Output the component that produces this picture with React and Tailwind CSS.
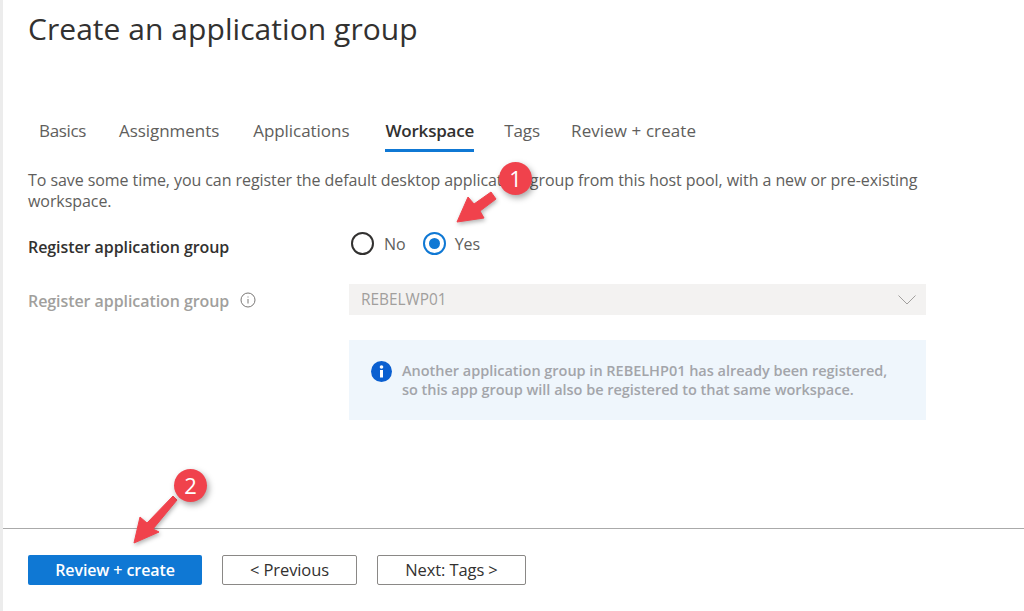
const TABS = [
  { label: "Basics", className: "tracking-[-0.35px]" },
  { label: "Assignments", className: "" },
  { label: "Applications", className: "ml-[1px]" },
  { label: "Workspace", className: "ml-[3px] border-b-[3px] border-[#0f78d4] font-semibold tracking-[-0.2px] text-[#323130]" },
  { label: "Tags", className: "-ml-[3px]" },
  { label: "Review + create", className: "-ml-[2px] tracking-[0.08px]" },
];

function Badge({ n, className }) {
  return (
    <div className={`absolute w-[33px] h-[33px] rounded-full bg-[#f0424c] text-white flex items-center justify-center text-[22px] shadow-[2px_3px_6px_rgba(0,0,0,0.35)] ${className}`}>
      {n}
    </div>
  );
}

function Arrow({ className, width, height, points }) {
  return (
    <svg className={`absolute drop-shadow-[1px_2px_2px_rgba(0,0,0,0.3)] ${className}`} width={width} height={height} viewBox={`0 0 ${width} ${height}`}>
      <polygon points={points} fill="#f0424c" stroke="#f0424c" strokeWidth="1" strokeLinejoin="round" />
    </svg>
  );
}

export default function App() {
  return (
    <div className="relative w-[1024px] h-[611px] bg-white overflow-hidden font-['Open_Sans','Noto_Sans',sans-serif] text-[#323130] border-l-[3px] border-[#ececec]">
      <h1 className="pl-[25px] pt-[9px] text-[30px] leading-[40px] tracking-[0.05px] font-medium text-[#323130]">Create an application group</h1>

      {/* Tabs */}
      <div className="flex mt-[69px] ml-[36px] gap-[33px] text-[17px] leading-[26px] tracking-[-0.05px] text-[#605e5c]">
        {TABS.map((t) => (
          <div key={t.label} className={`pb-[5px] ${t.className}`}>
            {t.label}
          </div>
        ))}
      </div>

      <p className="ml-[25px] mt-[18px] w-[900px] text-[16px] leading-[21px] tracking-[-0.07px] text-[#605e5c]">
        To save some time, you can register the default desktop application group from this host pool, with a new or pre-existing workspace.
      </p>

      {/* Register yes/no */}
      <div className="flex items-center mt-[16px] ml-[25px] h-[30px]">
        <div className="w-[323px] pt-[8px] text-[16px] font-semibold tracking-[-0.07px]">Register application group</div>
        <div className="flex items-center text-[16px] text-[#605e5c]">
          <span className="w-[23px] h-[23px] rounded-full border-2 border-[#323130]" />
          <span className="ml-[10px] mt-[1px]">No</span>
          <span className="ml-[17px] w-[23px] h-[23px] rounded-full border-2 border-[#0f78d4] flex items-center justify-center">
            <span className="w-[11px] h-[11px] rounded-full bg-[#0f78d4]" />
          </span>
          <span className="ml-[9px] mt-[1px]">Yes</span>
        </div>
      </div>

      {/* Disabled workspace select */}
      <div className="flex mt-[26px] ml-[25px]">
        <div className="w-[321px] flex items-center gap-[11px] pt-[2px] text-[16px] font-semibold tracking-[-0.07px] text-[#a19f9d] h-[31px]">
          Register application group
          <svg width="16" height="16" viewBox="0 0 16 16" fill="none" stroke="#7a7876" strokeWidth="1" className="-mt-[2px]">
            <circle cx="8" cy="8" r="7" />
            <path d="M8 7v4.5M8 4.5v1" />
          </svg>
        </div>
        <div className="flex flex-col w-[577px]">
          <div className="h-[31px] bg-[#f3f2f1] flex items-center justify-between pl-[12px] pr-[10px] text-[15.4px] text-[#a19f9d]">
            REBELWP01
            <svg width="18" height="10" viewBox="0 0 18 10" fill="none" stroke="#a19f9d" strokeWidth="1">
              <path d="M0.5 0.5L9 9L17.5 0.5" />
            </svg>
          </div>
          <div className="mt-[25px] h-[80px] bg-[#eff6fc] flex items-start pl-[22px] pt-[21px]">
            <svg width="21" height="21" viewBox="0 0 21 21" className="shrink-0">
              <circle cx="10.5" cy="10.5" r="10.5" fill="#0a5fd0" />
              <rect x="9" y="9" width="3" height="7.5" fill="#fff" />
              <circle cx="10.5" cy="6" r="1.8" fill="#fff" />
            </svg>
            <p className="ml-[10px] text-[14.5px] leading-[19px] font-semibold tracking-[-0.02px] text-[#a3a5aa]">
              Another application group in REBELHP01 has already been registered,<br />
              so this app group will also be registered to that same workspace.
            </p>
          </div>
        </div>
      </div>

      {/* Footer */}
      <div className="mt-[108px] border-t border-[#aaaaaa] pt-[26px] pl-[25px] flex gap-[20px] text-[16.5px] tracking-[-0.1px]">
        <button className="w-[174px] h-[30px] rounded-[2px] bg-[#0f78d4] text-white text-[16px] font-semibold">Review + create</button>
        <button className="w-[135px] h-[30px] rounded-[2px] border border-[#8a8886] text-[#323130]">&lt; Previous</button>
        <button className="w-[149px] h-[30px] rounded-[2px] border border-[#8a8886] text-[#323130]">Next: Tags &gt;</button>
      </div>

      {/* Annotations */}
      <Arrow className="left-[449px] top-[190px]" width="50" height="40" points="5,32 16,7 22,14 39,2 44,9 28,21 32,28" />
      <Badge n="1" className="left-[496px] top-[162px]" />
      <Arrow className="left-[127px] top-[490px]" width="50" height="60" points="4,53 10,27 17,33 43,6 47,10 23,39 29,42" />
      <Badge n="2" className="left-[171px] top-[469px]" />
    </div>
  );
}
